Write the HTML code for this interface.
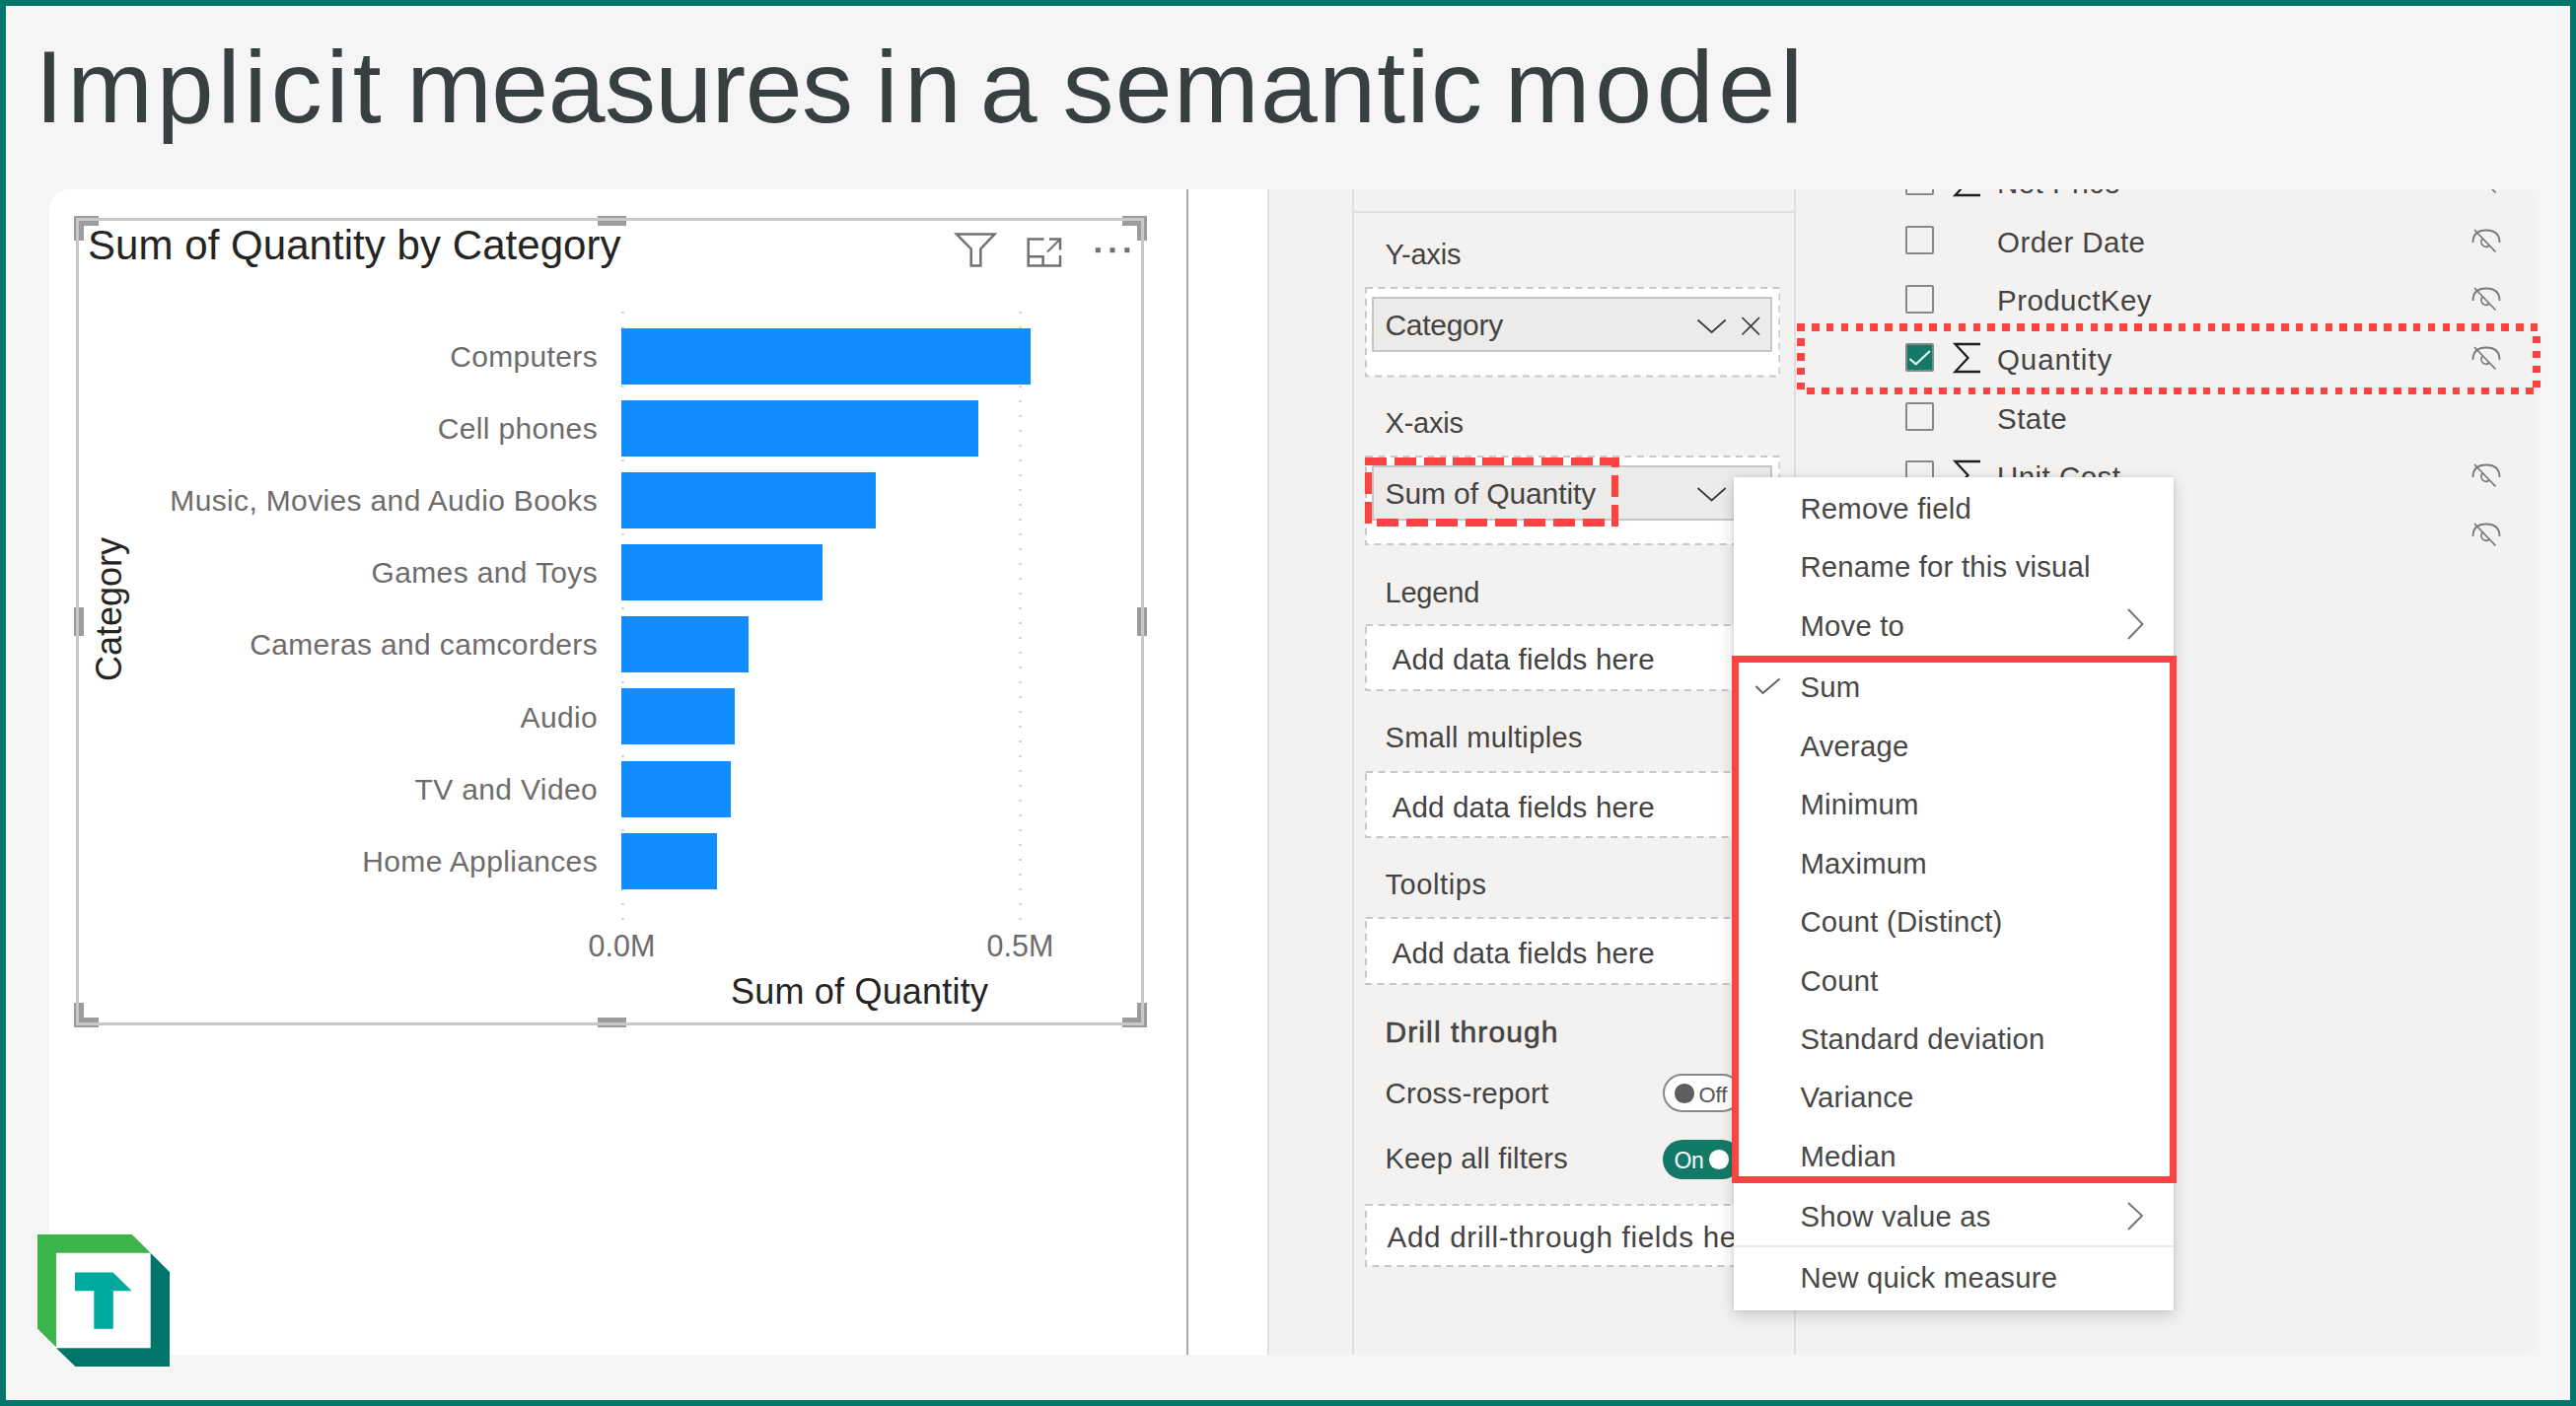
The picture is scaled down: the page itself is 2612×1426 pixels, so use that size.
<!DOCTYPE html>
<html><head><meta charset="utf-8"><title>Implicit measures</title>
<style>
html,body{margin:0;padding:0;width:2612px;height:1426px;overflow:hidden;background:#03766C;}
body{position:relative;font-family:"Liberation Sans", sans-serif;}
.t{position:absolute;white-space:nowrap;line-height:1;font-family:"Liberation Sans", sans-serif;}
</style></head><body>
<div style="position:absolute;left:6px;top:6px;width:2600px;height:1414px;background:#F5F5F5"></div>
<div class="t" style="left:35.4px;top:35.6px;font-size:104px;color:#373F41;font-weight:400;letter-spacing:3.94px;">Implicit</div>
<div class="t" style="left:412.3px;top:35.6px;font-size:104px;color:#373F41;font-weight:400;letter-spacing:-0.57px;">measures</div>
<div class="t" style="left:887.5px;top:35.6px;font-size:104px;color:#373F41;font-weight:400;letter-spacing:6.5px;">in</div>
<div class="t" style="left:993.8px;top:35.6px;font-size:104px;color:#373F41;font-weight:400;letter-spacing:0px;">a</div>
<div class="t" style="left:1077.5px;top:35.6px;font-size:104px;color:#373F41;font-weight:400;letter-spacing:1.33px;">semantic</div>
<div class="t" style="left:1525.8px;top:35.6px;font-size:104px;color:#373F41;font-weight:400;letter-spacing:4.75px;">model</div>
<div style="position:absolute;left:50px;top:192px;width:2523px;height:1182px;border-radius:20px 15px 16px 20px;overflow:hidden;background:#F3F2F0">
<div style="position:absolute;left:0;top:0;width:1235px;height:1182px;background:#fff"></div>
</div>
<div style="position:absolute;left:1203px;top:192px;width:2px;height:1182px;background:#ADA9A6"></div>
<div style="position:absolute;left:1285px;top:192px;width:2px;height:1182px;background:#E1DFDD"></div>
<div style="position:absolute;left:1371px;top:192px;width:2px;height:1182px;background:#E1DFDD"></div>
<div style="position:absolute;left:1819px;top:192px;width:2px;height:1182px;background:#E1DFDD"></div>
<div style="position:absolute;left:1373px;top:214px;width:446px;height:2px;background:#E1DFDD"></div>
<div style="position:absolute;left:77px;top:221px;width:1077px;height:813px;border:3px solid #C8C8C8"></div>
<div style="position:absolute;left:75px;top:219px;width:25px;height:10px;background:#9C9C9C"></div>
<div style="position:absolute;left:75px;top:219px;width:10px;height:25px;background:#9C9C9C"></div>
<div style="position:absolute;left:1138px;top:219px;width:25px;height:10px;background:#9C9C9C"></div>
<div style="position:absolute;left:1153px;top:219px;width:10px;height:25px;background:#9C9C9C"></div>
<div style="position:absolute;left:75px;top:1032px;width:25px;height:10px;background:#9C9C9C"></div>
<div style="position:absolute;left:75px;top:1017px;width:10px;height:25px;background:#9C9C9C"></div>
<div style="position:absolute;left:1138px;top:1032px;width:25px;height:10px;background:#9C9C9C"></div>
<div style="position:absolute;left:1153px;top:1017px;width:10px;height:25px;background:#9C9C9C"></div>
<div style="position:absolute;left:606px;top:219px;width:29px;height:10px;background:#9C9C9C"></div>
<div style="position:absolute;left:606px;top:1032px;width:29px;height:10px;background:#9C9C9C"></div>
<div style="position:absolute;left:75px;top:616px;width:10px;height:29px;background:#9C9C9C"></div>
<div style="position:absolute;left:1153px;top:616px;width:10px;height:29px;background:#9C9C9C"></div>
<div style="position:absolute;left:77px;top:221px;width:1083px;height:3px;background:#C8C8C8"></div>
<div style="position:absolute;left:77px;top:1037px;width:1083px;height:3px;background:#C8C8C8"></div>
<div style="position:absolute;left:77px;top:221px;width:3px;height:819px;background:#C8C8C8"></div>
<div style="position:absolute;left:1157px;top:221px;width:3px;height:819px;background:#C8C8C8"></div>
<div class="t" style="left:89.0px;top:227.8px;font-size:42px;color:#252423;font-weight:400;letter-spacing:0.05px;">Sum of Quantity by Category</div>
<svg style="position:absolute;left:960px;top:225px" width="200" height="60" viewBox="960 225 200 60"><g fill="none" stroke="#707070" stroke-width="2.5"><path d="M970 237.5 H1008.5 L994.3 252.5 V269.5 H984.7 V252.5 Z" stroke-linejoin="miter"/><path d="M1058.5 242.5 H1042.7 V269.5 H1075 V259"/><path d="M1064 242.5 H1075 V253.5"/><path d="M1042.7 260.3 H1057.6 V269.5"/><path d="M1062 255.5 L1074 243.5" stroke-width="2"/></g><g fill="#707070"><rect x="1110.8" y="251.2" width="5" height="5"/><rect x="1125.5" y="251.2" width="5" height="5"/><rect x="1140.3" y="251.2" width="5" height="5"/></g></svg>
<div style="position:absolute;left:630px;top:316px;width:3px;height:622px;background:repeating-linear-gradient(to bottom,#D6D6D6 0 2px,transparent 2px 15px)"></div>
<div style="position:absolute;left:1033px;top:316px;width:3px;height:622px;background:repeating-linear-gradient(to bottom,#D6D6D6 0 2px,transparent 2px 15px)"></div>
<div style="position:absolute;left:630px;top:333px;width:415px;height:57px;background:#118DFF"></div>
<div class="t" style="right:2006.0px;top:347.0px;font-size:30px;color:#6E6C6A;font-weight:400;letter-spacing:0.35px;text-align:right">Computers</div>
<div style="position:absolute;left:630px;top:406px;width:362px;height:57px;background:#118DFF"></div>
<div class="t" style="right:2006.0px;top:420.1px;font-size:30px;color:#6E6C6A;font-weight:400;letter-spacing:0.35px;text-align:right">Cell phones</div>
<div style="position:absolute;left:630px;top:479px;width:258px;height:57px;background:#118DFF"></div>
<div class="t" style="right:2006.0px;top:493.2px;font-size:30px;color:#6E6C6A;font-weight:400;letter-spacing:0.35px;text-align:right">Music, Movies and Audio Books</div>
<div style="position:absolute;left:630px;top:552px;width:204px;height:57px;background:#118DFF"></div>
<div class="t" style="right:2006.0px;top:566.3px;font-size:30px;color:#6E6C6A;font-weight:400;letter-spacing:0.35px;text-align:right">Games and Toys</div>
<div style="position:absolute;left:630px;top:625px;width:129px;height:57px;background:#118DFF"></div>
<div class="t" style="right:2006.0px;top:639.4px;font-size:30px;color:#6E6C6A;font-weight:400;letter-spacing:0.35px;text-align:right">Cameras and camcorders</div>
<div style="position:absolute;left:630px;top:698px;width:115px;height:57px;background:#118DFF"></div>
<div class="t" style="right:2006.0px;top:712.5px;font-size:30px;color:#6E6C6A;font-weight:400;letter-spacing:0.35px;text-align:right">Audio</div>
<div style="position:absolute;left:630px;top:772px;width:111px;height:57px;background:#118DFF"></div>
<div class="t" style="right:2006.0px;top:785.6px;font-size:30px;color:#6E6C6A;font-weight:400;letter-spacing:0.35px;text-align:right">TV and Video</div>
<div style="position:absolute;left:630px;top:845px;width:97px;height:57px;background:#118DFF"></div>
<div class="t" style="right:2006.0px;top:858.7px;font-size:30px;color:#6E6C6A;font-weight:400;letter-spacing:0.35px;text-align:right">Home Appliances</div>
<div class="t" style="left:596.5px;top:943.7px;font-size:30.5px;color:#6E6C6A;font-weight:400;letter-spacing:0px;">0.0M</div>
<div class="t" style="left:1000.5px;top:943.7px;font-size:30.5px;color:#6E6C6A;font-weight:400;letter-spacing:0px;">0.5M</div>
<div class="t" style="left:741.0px;top:988.0px;font-size:36px;color:#252423;font-weight:400;letter-spacing:0.2px;">Sum of Quantity</div>
<div class="t" style="left:92.5px;top:691px;font-size:36px;color:#252423;transform-origin:0 0;transform:rotate(-90deg)">Category</div>
<div class="t" style="left:1404.5px;top:244.2px;font-size:29px;color:#444342;font-weight:400;letter-spacing:-0.2px;">Y-axis</div>
<svg style="position:absolute;left:1383.5px;top:291px" width="421.5" height="91.5"><rect x="1" y="1" width="419.5" height="89.5" fill="#fff" stroke="#C8C8C8" stroke-width="2" stroke-dasharray="7 5.5"/></svg>
<div style="position:absolute;left:1391px;top:301px;width:402px;height:52px;background:#EDEBE9;border:2.5px solid #C6C6C6;border-radius:1px"></div>
<div class="t" style="left:1404.5px;top:314.9px;font-size:30px;color:#444342;font-weight:400;letter-spacing:-0.3px;">Category</div>
<svg style="position:absolute;left:1710px;top:300px" width="90" height="60" viewBox="1710 300 90 60"><g fill="none" stroke="#3A3A3A" stroke-width="1.7"><path d="M1721.5 324.5 L1735.6 337 L1749.7 324.5"/><path d="M1766.5 322 L1784 339.5 M1784 322 L1766.5 339.5"/></g></svg>
<div class="t" style="left:1404.5px;top:414.9px;font-size:29px;color:#444342;font-weight:400;letter-spacing:-0.2px;">X-axis</div>
<svg style="position:absolute;left:1383.5px;top:462px" width="421.5" height="91"><rect x="1" y="1" width="419.5" height="89" fill="#fff" stroke="#C8C8C8" stroke-width="2" stroke-dasharray="7 5.5"/></svg>
<div style="position:absolute;left:1391px;top:472px;width:402px;height:52px;background:#EDEBE9;border:2.5px solid #C6C6C6;border-radius:1px"></div>
<div class="t" style="left:1404.5px;top:485.7px;font-size:30px;color:#444342;font-weight:400;letter-spacing:-0.1px;">Sum of Quantity</div>
<svg style="position:absolute;left:1710px;top:470px" width="60" height="60" viewBox="1710 470 60 60"><g fill="none" stroke="#3A3A3A" stroke-width="1.7"><path d="M1721.5 495 L1735.6 507.5 L1749.7 495"/></g></svg>
<div style="position:absolute;left:1383.6px;top:464.3px;width:258.0px;height:7.5px;background:repeating-linear-gradient(to right,#FD4242 0 22.1px,transparent 22.1px 29.8px)"></div>
<div style="position:absolute;left:1633.9px;top:464.3px;width:7.7px;height:9.6px;background:#FD4242"></div>
<div style="position:absolute;left:1633.9px;top:481.9px;width:7.6px;height:51.8px;background:repeating-linear-gradient(to bottom,#FD4242 0 22.1px,transparent 22.1px 29.8px)"></div>
<div style="position:absolute;left:1396.1px;top:526.3px;width:231.4px;height:7.5px;background:repeating-linear-gradient(to right,#FD4242 0 22px,transparent 22px 29.9px)"></div>
<div style="position:absolute;left:1383.6px;top:479.3px;width:7.6px;height:51.7px;background:repeating-linear-gradient(to bottom,#FD4242 0 22.1px,transparent 22.1px 29.8px)"></div>
<div class="t" style="left:1404.5px;top:586.6px;font-size:29px;color:#444342;font-weight:400;letter-spacing:-0.2px;">Legend</div>
<svg style="position:absolute;left:1383.5px;top:633px" width="421.5" height="68"><rect x="1" y="1" width="419.5" height="66" fill="#fff" stroke="#C8C8C8" stroke-width="2" stroke-dasharray="7 5.5"/></svg>
<div class="t" style="left:1411.5px;top:654.3px;font-size:29.6px;color:#444342;font-weight:400;letter-spacing:0.15px;">Add data fields here</div>
<div class="t" style="left:1404.5px;top:734.4px;font-size:29px;color:#444342;font-weight:400;letter-spacing:0.35px;">Small multiples</div>
<svg style="position:absolute;left:1383.5px;top:782px" width="421.5" height="68"><rect x="1" y="1" width="419.5" height="66" fill="#fff" stroke="#C8C8C8" stroke-width="2" stroke-dasharray="7 5.5"/></svg>
<div class="t" style="left:1411.5px;top:803.6px;font-size:29.6px;color:#444342;font-weight:400;letter-spacing:0.15px;">Add data fields here</div>
<div class="t" style="left:1404.5px;top:883.0px;font-size:29px;color:#444342;font-weight:400;letter-spacing:0.6px;">Tooltips</div>
<svg style="position:absolute;left:1383.5px;top:930px" width="421.5" height="69"><rect x="1" y="1" width="419.5" height="67" fill="#fff" stroke="#C8C8C8" stroke-width="2" stroke-dasharray="7 5.5"/></svg>
<div class="t" style="left:1411.5px;top:951.8px;font-size:29.6px;color:#444342;font-weight:400;letter-spacing:0.15px;">Add data fields here</div>
<div class="t" style="left:1404.5px;top:1031.5px;font-size:30px;color:#444342;font-weight:400;letter-spacing:1.1px;-webkit-text-stroke:0.6px #444342">Drill through</div>
<div class="t" style="left:1404.5px;top:1093.9px;font-size:29.5px;color:#444342;font-weight:400;letter-spacing:0.17px;">Cross-report</div>
<div class="t" style="left:1404.5px;top:1161.3px;font-size:29px;color:#444342;font-weight:400;letter-spacing:0.2px;">Keep all filters</div>
<div style="position:absolute;left:1686px;top:1089px;width:76px;height:35px;background:#fff;border:2px solid #8A8886;border-radius:20px"></div>
<div style="position:absolute;left:1698.3px;top:1099px;width:19.5px;height:19.5px;border-radius:50%;background:#605E5C"></div>
<div class="t" style="left:1722.5px;top:1099.6px;font-size:22px;color:#555;font-weight:400;letter-spacing:0px;">Off</div>
<div style="position:absolute;left:1686px;top:1156px;width:80px;height:40px;background:#137A67;border-radius:20px"></div>
<div class="t" style="left:1697.5px;top:1166.0px;font-size:23px;color:#fff;font-weight:400;letter-spacing:-0.5px;">On</div>
<div style="position:absolute;left:1733px;top:1166px;width:19.5px;height:19.5px;border-radius:50%;background:#fff"></div>
<svg style="position:absolute;left:1383.5px;top:1221px" width="421.5" height="64"><rect x="1" y="1" width="419.5" height="62" fill="#fff" stroke="#C8C8C8" stroke-width="2" stroke-dasharray="7 5.5"/></svg>
<div class="t" style="left:1406.5px;top:1239.8px;font-size:29.6px;color:#444342;font-weight:400;letter-spacing:0.7px;">Add drill-through fields here</div>
<div style="position:absolute;left:1932px;top:169.4px;width:25px;height:25px;border:2px solid #8A8886;border-radius:2px"></div>
<svg style="position:absolute;left:1975px;top:163.9px" width="40" height="40" viewBox="1975 163.9 40 40"><path d="M2008 169.9 H1982.5 L1995.5 183.9 L1982.5 197.9 H2008" fill="none" stroke="#1E1E1E" stroke-width="2.3"/></svg>
<div class="t" style="left:2025.0px;top:171.1px;font-size:29.5px;color:#444342;font-weight:400;letter-spacing:0.45px;">Net Price</div>
<svg style="position:absolute;left:2500px;top:163.9px" width="44" height="40" viewBox="2500 163.9 44 40"><g fill="none" stroke="#7A7A7A" stroke-width="1.8"><path d="M2507.5 185.9 Q2507.5 173.4 2521 173.4 Q2534.5 173.4 2534.5 185.9"/><path d="M2509 172.9 L2530.5 195.4"/><path d="M2517.5 181.9 A4.3 4.3 0 0 0 2524 188.9"/></g></svg>
<div style="position:absolute;left:1932px;top:229.0px;width:25px;height:25px;border:2px solid #8A8886;border-radius:2px"></div>
<div class="t" style="left:2025.0px;top:230.7px;font-size:29.5px;color:#444342;font-weight:400;letter-spacing:0.45px;">Order Date</div>
<svg style="position:absolute;left:2500px;top:223.5px" width="44" height="40" viewBox="2500 223.5 44 40"><g fill="none" stroke="#7A7A7A" stroke-width="1.8"><path d="M2507.5 245.5 Q2507.5 233.0 2521 233.0 Q2534.5 233.0 2534.5 245.5"/><path d="M2509 232.5 L2530.5 255.0"/><path d="M2517.5 241.5 A4.3 4.3 0 0 0 2524 248.5"/></g></svg>
<div style="position:absolute;left:1932px;top:288.6px;width:25px;height:25px;border:2px solid #8A8886;border-radius:2px"></div>
<div class="t" style="left:2025.0px;top:290.3px;font-size:29.5px;color:#444342;font-weight:400;letter-spacing:0.45px;">ProductKey</div>
<svg style="position:absolute;left:2500px;top:283.1px" width="44" height="40" viewBox="2500 283.1 44 40"><g fill="none" stroke="#7A7A7A" stroke-width="1.8"><path d="M2507.5 305.1 Q2507.5 292.6 2521 292.6 Q2534.5 292.6 2534.5 305.1"/><path d="M2509 292.1 L2530.5 314.6"/><path d="M2517.5 301.1 A4.3 4.3 0 0 0 2524 308.1"/></g></svg>
<div style="position:absolute;left:1932px;top:348.2px;width:25px;height:25px;border:2px solid #8A8886;border-radius:2px;background:#137A67"></div>
<svg style="position:absolute;left:1930px;top:346.7px" width="34" height="34" viewBox="1930 346.7 34 34"><path d="M1936.4 363.7 L1942.7 369.0 L1956.9 355.7" fill="none" stroke="#E8F3F0" stroke-width="2.2"/></svg>
<svg style="position:absolute;left:1975px;top:342.7px" width="40" height="40" viewBox="1975 342.7 40 40"><path d="M2008 348.7 H1982.5 L1995.5 362.7 L1982.5 376.7 H2008" fill="none" stroke="#1E1E1E" stroke-width="2.3"/></svg>
<div class="t" style="left:2025.0px;top:349.9px;font-size:29.5px;color:#444342;font-weight:400;letter-spacing:0.9px;">Quantity</div>
<svg style="position:absolute;left:2500px;top:342.7px" width="44" height="40" viewBox="2500 342.7 44 40"><g fill="none" stroke="#7A7A7A" stroke-width="1.8"><path d="M2507.5 364.7 Q2507.5 352.2 2521 352.2 Q2534.5 352.2 2534.5 364.7"/><path d="M2509 351.7 L2530.5 374.2"/><path d="M2517.5 360.7 A4.3 4.3 0 0 0 2524 367.7"/></g></svg>
<div style="position:absolute;left:1932px;top:407.8px;width:25px;height:25px;border:2px solid #8A8886;border-radius:2px"></div>
<div class="t" style="left:2025.0px;top:409.5px;font-size:29.5px;color:#444342;font-weight:400;letter-spacing:0.45px;">State</div>
<div style="position:absolute;left:1932px;top:467.4px;width:25px;height:25px;border:2px solid #8A8886;border-radius:2px"></div>
<svg style="position:absolute;left:1975px;top:461.9px" width="40" height="40" viewBox="1975 461.9 40 40"><path d="M2008 467.9 H1982.5 L1995.5 481.9 L1982.5 495.9 H2008" fill="none" stroke="#1E1E1E" stroke-width="2.3"/></svg>
<div class="t" style="left:2025.0px;top:469.1px;font-size:29.5px;color:#444342;font-weight:400;letter-spacing:0.45px;">Unit Cost</div>
<svg style="position:absolute;left:2500px;top:461.9px" width="44" height="40" viewBox="2500 461.9 44 40"><g fill="none" stroke="#7A7A7A" stroke-width="1.8"><path d="M2507.5 483.9 Q2507.5 471.4 2521 471.4 Q2534.5 471.4 2534.5 483.9"/><path d="M2509 470.9 L2530.5 493.4"/><path d="M2517.5 479.9 A4.3 4.3 0 0 0 2524 486.9"/></g></svg>
<svg style="position:absolute;left:2500px;top:521.5px" width="44" height="40" viewBox="2500 521.5 44 40"><g fill="none" stroke="#7A7A7A" stroke-width="1.8"><path d="M2507.5 543.5 Q2507.5 531.0 2521 531.0 Q2534.5 531.0 2534.5 543.5"/><path d="M2509 530.5 L2530.5 553.0"/><path d="M2517.5 539.5 A4.3 4.3 0 0 0 2524 546.5"/></g></svg>
<div style="position:absolute;left:1822px;top:150px;width:760px;height:42px;background:#F5F5F5"></div>
<div style="position:absolute;left:1822.2px;top:328px;width:758.68px;height:7.5px;background:repeating-linear-gradient(to right,#FD4242 0 7.7px,transparent 7.7px 14.876px)"></div>
<div style="position:absolute;left:1832px;top:392.7px;width:744.00px;height:7.5px;background:repeating-linear-gradient(to right,#FD4242 0 7.7px,transparent 7.7px 14.88px)"></div>
<div style="position:absolute;left:1822.2px;top:343px;width:7.7px;height:60.00px;background:repeating-linear-gradient(to bottom,#FD4242 0 7.5px,transparent 7.5px 15px)"></div>
<div style="position:absolute;left:2568.4px;top:340.5px;width:7.7px;height:59.40px;background:repeating-linear-gradient(to bottom,#FD4242 0 7.5px,transparent 7.5px 14.85px)"></div>
<div style="position:absolute;left:1757.5px;top:483.7px;width:446.5px;height:845px;background:#fff;box-shadow:0 5px 16px rgba(0,0,0,0.17),0 0 4px rgba(0,0,0,0.10)"></div>
<div class="t" style="left:1825.5px;top:501.4px;font-size:29.3px;color:#484746;font-weight:400;letter-spacing:0.2px;">Remove field</div>
<div class="t" style="left:1825.5px;top:560.3px;font-size:29.3px;color:#484746;font-weight:400;letter-spacing:0.2px;">Rename for this visual</div>
<div class="t" style="left:1825.5px;top:620.1px;font-size:29.3px;color:#484746;font-weight:400;letter-spacing:0.2px;">Move to</div>
<div class="t" style="left:1825.5px;top:681.7px;font-size:29.3px;color:#484746;font-weight:400;letter-spacing:0.2px;">Sum</div>
<div class="t" style="left:1825.5px;top:741.5px;font-size:29.3px;color:#484746;font-weight:400;letter-spacing:0.2px;">Average</div>
<div class="t" style="left:1825.5px;top:800.6px;font-size:29.3px;color:#484746;font-weight:400;letter-spacing:0.2px;">Minimum</div>
<div class="t" style="left:1825.5px;top:860.7px;font-size:29.3px;color:#484746;font-weight:400;letter-spacing:0.2px;">Maximum</div>
<div class="t" style="left:1825.5px;top:920.4px;font-size:29.3px;color:#484746;font-weight:400;letter-spacing:0.2px;">Count (Distinct)</div>
<div class="t" style="left:1825.5px;top:979.8px;font-size:29.3px;color:#484746;font-weight:400;letter-spacing:0.2px;">Count</div>
<div class="t" style="left:1825.5px;top:1039.1px;font-size:29.3px;color:#484746;font-weight:400;letter-spacing:0.2px;">Standard deviation</div>
<div class="t" style="left:1825.5px;top:1098.1px;font-size:29.3px;color:#484746;font-weight:400;letter-spacing:0.2px;">Variance</div>
<div class="t" style="left:1825.5px;top:1157.6px;font-size:29.3px;color:#484746;font-weight:400;letter-spacing:0.2px;">Median</div>
<div class="t" style="left:1825.5px;top:1219.1px;font-size:29.3px;color:#484746;font-weight:400;letter-spacing:0.2px;">Show value as</div>
<div class="t" style="left:1825.5px;top:1281.1px;font-size:29.3px;color:#484746;font-weight:400;letter-spacing:0.2px;">New quick measure</div>
<div style="position:absolute;left:1757.5px;top:1263px;width:446.5px;height:2px;background:#EDEBE9"></div>
<svg style="position:absolute;left:2150px;top:610px" width="40" height="650" viewBox="2150 610 40 650"><g fill="none" stroke="#707070" stroke-width="1.8"><path d="M2158 618 L2172.5 633 L2158 648"/><path d="M2158 1220 L2172 1233 L2158 1247"/></g></svg>
<svg style="position:absolute;left:1775px;top:680px" width="40" height="30" viewBox="1775 680 40 30"><path d="M1780.5 696 L1787.5 703 L1804.5 688.5" fill="none" stroke="#605E5C" stroke-width="1.8"/></svg>
<div style="position:absolute;left:1756px;top:665px;width:451px;height:7px;background:#FD4242"></div>
<div style="position:absolute;left:1756px;top:1193px;width:451px;height:7px;background:#FD4242"></div>
<div style="position:absolute;left:1756px;top:665px;width:7px;height:535px;background:#FD4242"></div>
<div style="position:absolute;left:2200px;top:665px;width:7px;height:535px;background:#FD4242"></div>
<svg style="position:absolute;left:30px;top:1245px" width="150" height="150" viewBox="30 1245 150 150"><rect x="57" y="1270.7" width="95.7" height="96.5" fill="#fff"/><path d="M38 1252 H133.8 L152.7 1270.7 H57 V1366.5 L38 1347.6 Z" fill="#3CB44A"/><path d="M152.7 1270.7 L172 1290 V1386 H76.4 L57 1367.2 H152.7 Z" fill="#03766C"/><path d="M76 1290.4 H114.6 L133.5 1309.3 H114.8 V1347.7 H95.3 V1309.3 H76 Z" fill="#00A99D"/></svg>
</body></html>
